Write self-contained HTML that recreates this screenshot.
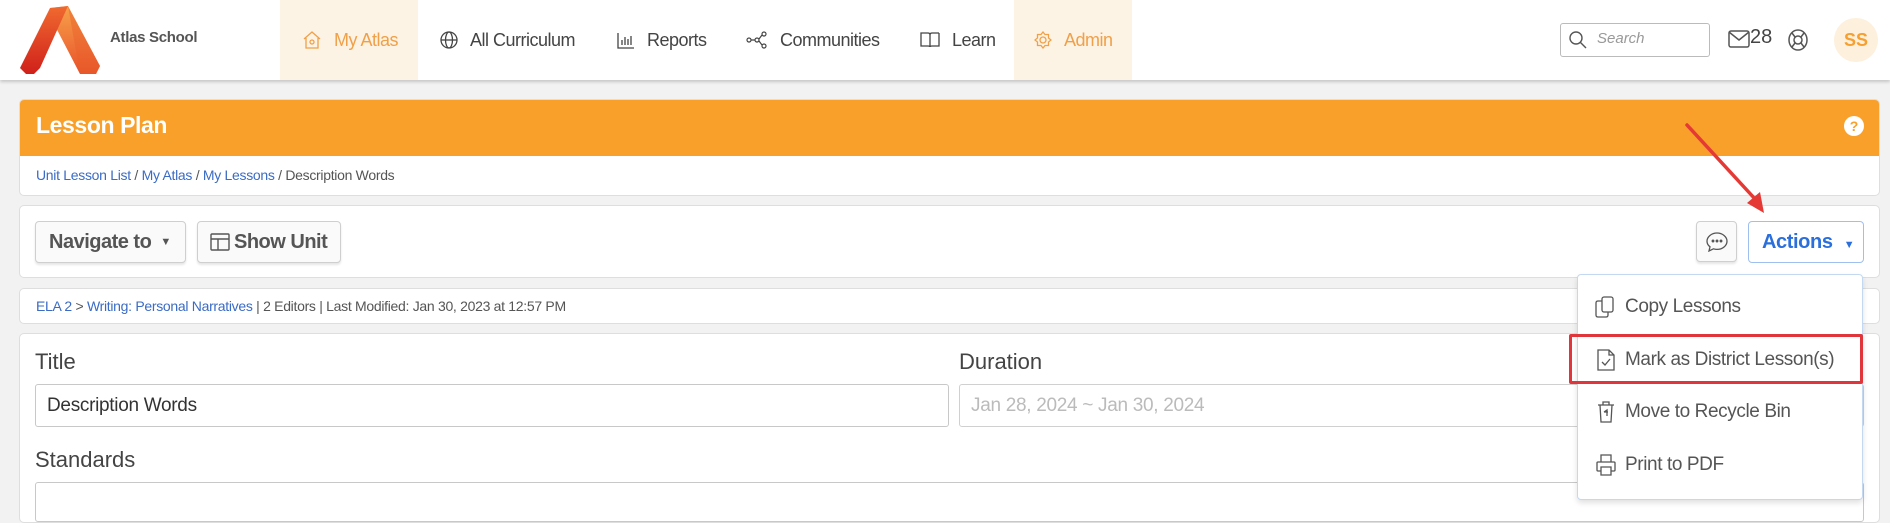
<!DOCTYPE html>
<html><head><meta charset="utf-8"><style>
*{box-sizing:border-box;margin:0;padding:0}
body{width:1890px;height:512px;overflow:hidden;background:#f2f2f2;font-family:"Liberation Sans",sans-serif;position:relative;color:#333}
.abs{position:absolute}
.hdr{left:0;top:0;width:1890px;height:80px;background:#fff;box-shadow:0 2px 3px rgba(0,0,0,.18)}
.nav{top:0;height:80px;display:flex;align-items:center;font-size:18px;color:#444;letter-spacing:-0.5px}
.nav svg{margin-right:12px}
.card{background:#fff;border:1px solid #dedede;border-radius:5px}
.btn{background:#fafafa;border:1px solid #cfcfcf;border-radius:4px;box-shadow:0 2px 2px rgba(0,0,0,.1);display:flex;align-items:center;font-size:20px;font-weight:bold;color:#555;letter-spacing:-0.5px}
a{color:#3b6bc4;text-decoration:none}
.item{left:1625px;font-size:19px;color:#555;letter-spacing:-0.4px}
</style></head><body>
<div class="abs hdr"></div>
<svg class="abs" style="left:20px;top:6px" width="80" height="68" viewBox="0 0 80 68">
<defs><linearGradient id="g1" x1="0" y1="0" x2="0" y2="1"><stop offset="0" stop-color="#f06a30"/><stop offset="1" stop-color="#d0201a"/></linearGradient>
<linearGradient id="g2" x1="0" y1="0" x2="0" y2="1"><stop offset="0" stop-color="#f7a24a"/><stop offset="1" stop-color="#e8502a"/></linearGradient></defs>
<polygon points="30,2 48,0 80,60 76,68 60,68 32,14" fill="url(#g2)"/>
<polygon points="30,2 48,0 20,62 14,68 6,68 0,62" fill="url(#g1)"/>
<polygon points="48,0 60,68 76,68 80,60" fill="#e8602a" opacity=".45"/>
</svg>
<div class="abs" style="left:110px;top:29px;font-size:15px;font-weight:bold;color:#555;letter-spacing:-0.3px">Atlas School</div>
<div class="abs" style="left:280px;top:0;width:138px;height:80px;background:#fdf3e4"></div>
<div class="abs" style="left:1014px;top:0;width:118px;height:80px;background:#fdf3e4"></div>
<div class="abs nav" style="left:302px;color:#f0a048"><svg width="20" height="20" viewBox="0 0 20 20" fill="none" stroke="#f0a048" stroke-width="1.3"><path d="M2 9 L10 2 L18 9 M4 8 V18 H16 V8"/><circle cx="10" cy="12" r="2"/></svg>My Atlas</div>
<div class="abs nav" style="left:440px"><svg width="18" height="18" viewBox="0 0 18 18" fill="none" stroke="#444" stroke-width="1.3"><circle cx="9" cy="9" r="8"/><ellipse cx="9" cy="9" rx="3.5" ry="8"/><path d="M1 9H17"/></svg>All Curriculum</div>
<div class="abs nav" style="left:617px"><svg width="18" height="18" viewBox="0 0 18 18" fill="none" stroke="#444" stroke-width="1.3"><path d="M1 2V17H17M5 14V9M8 14V6M11 14V8M14 14V5"/></svg>Reports</div>
<div class="abs nav" style="left:746px"><svg width="22" height="18" viewBox="0 0 22 18" fill="none" stroke="#444" stroke-width="1.2"><circle cx="3" cy="9" r="2"/><circle cx="11" cy="9" r="2"/><circle cx="18" cy="3" r="2"/><circle cx="18" cy="15" r="2"/><path d="M5 9H9M13 8L16 4M13 10L16 14"/></svg>Communities</div>
<div class="abs nav" style="left:920px"><svg width="20" height="18" viewBox="0 0 20 18" fill="none" stroke="#444" stroke-width="1.3"><path d="M1 2H8Q10 2 10 4V16Q10 15 8 15H1ZM19 2H12Q10 2 10 4M19 2V15H12Q10 15 10 16"/></svg>Learn</div>
<div class="abs nav" style="left:1034px;color:#f0a048"><svg width="18" height="18" viewBox="0 0 18 18" fill="none" stroke="#f0a048" stroke-width="1.3"><circle cx="9" cy="9" r="3"/><path d="M9 1L11 3.5L14.5 3.5L14.5 7L17 9L14.5 11L14.5 14.5L11 14.5L9 17L7 14.5L3.5 14.5L3.5 11L1 9L3.5 7L3.5 3.5L7 3.5Z"/></svg>Admin</div>
<div class="abs" style="left:1560px;top:23px;width:150px;height:34px;border:1px solid #bbb;border-radius:3px;background:#fff"></div>
<svg class="abs" style="left:1569px;top:31px" width="18" height="18" viewBox="0 0 18 18" fill="none" stroke="#555" stroke-width="1.4"><circle cx="7" cy="7" r="6"/><path d="M11.5 11.5L17 17"/></svg>
<div class="abs" style="left:1597px;top:30px;font-size:15px;font-style:italic;color:#999">Search</div>
<svg class="abs" style="left:1728px;top:30px" width="22" height="18" viewBox="0 0 22 18" fill="none" stroke="#555" stroke-width="1.5"><rect x="1" y="1" width="20" height="16" rx="2"/><path d="M1 2L11 10L21 2"/></svg>
<div class="abs" style="left:1750px;top:26px;font-size:20px;color:#444">28</div>
<svg class="abs" style="left:1788px;top:29px" width="20" height="22" viewBox="0 0 20 22" fill="none" stroke="#555" stroke-width="1.5"><ellipse cx="10" cy="11" rx="9" ry="10"/><circle cx="10" cy="11" r="4"/><path d="M4 4L7 8M16 4L13 8M4 18L7 14M16 18L13 14"/></svg>
<div class="abs" style="left:1834px;top:18px;width:44px;height:44px;border-radius:50%;background:#fdf0dc;color:#f5a030;font-weight:bold;font-size:18px;text-align:center;line-height:44px">SS</div>

<div class="abs card" style="left:19px;top:99px;width:1861px;height:97px;overflow:hidden">
<div style="height:56px;background:#f9a02a;color:#fff;font-weight:bold;font-size:23px;padding:12px 0 0 16px;letter-spacing:-0.4px">Lesson Plan</div>
<div style="padding:11px 0 0 16px;font-size:14px;color:#555;letter-spacing:-0.3px"><a>Unit Lesson List</a> / <a>My Atlas</a> / <a>My Lessons</a> / Description Words</div>
</div>
<div class="abs" style="left:1844px;top:116px;width:20px;height:20px;border-radius:50%;background:#fff;color:#f9a02a;font-weight:bold;font-size:14px;text-align:center;line-height:20px">?</div>

<div class="abs card" style="left:19px;top:205px;width:1861px;height:73px"></div>
<div class="abs btn" style="left:35px;top:221px;width:151px;height:42px;padding-left:13px">Navigate to<span style="font-size:11px;margin-left:9px">&#9660;</span></div>
<div class="abs btn" style="left:197px;top:221px;width:144px;height:42px;padding-left:12px"><svg width="20" height="20" viewBox="0 0 20 20" fill="none" stroke="#555" stroke-width="1.4" style="margin-right:4px"><rect x="1" y="2" width="18" height="16" rx="1"/><path d="M1 7H19M8 7V18"/></svg>Show Unit</div>
<div class="abs btn" style="left:1696px;top:221px;width:41px;height:41px;justify-content:center"><svg width="22" height="20" viewBox="0 0 22 20" fill="none" stroke="#555" stroke-width="1.3"><path d="M11 1C5.5 1 1 4.8 1 9.2C1 11.5 2.2 13.4 4 14.8L3 19L7.5 16.8C8.6 17.2 9.8 17.4 11 17.4C16.5 17.4 21 13.6 21 9.2C21 4.8 16.5 1 11 1Z"/><circle cx="7" cy="9" r=".8" fill="#555"/><circle cx="11" cy="9" r=".8" fill="#555"/><circle cx="15" cy="9" r=".8" fill="#555"/></svg></div>
<div class="abs" style="left:1748px;top:221px;width:116px;height:42px;border:1px solid #9fc0ee;border-radius:4px;background:#fff;color:#2a6fdb;font-weight:bold;font-size:20px;padding:9px 0 0 13px;letter-spacing:-0.4px">Actions <span style="font-size:11px;margin-left:6px">&#9660;</span></div>

<div class="abs card" style="left:19px;top:288px;width:1861px;height:36px;padding:9px 0 0 16px;font-size:14px;color:#555;letter-spacing:-0.3px"><a>ELA 2</a> &gt; <a>Writing: Personal Narratives</a> | 2 Editors | Last Modified: Jan 30, 2023 at 12:57 PM</div>

<div class="abs card" style="left:19px;top:333px;width:1861px;height:190px"></div>
<div class="abs" style="left:35px;top:349px;font-size:22px;color:#444">Title</div>
<div class="abs" style="left:959px;top:349px;font-size:22px;color:#444">Duration</div>
<div class="abs" style="left:35px;top:384px;width:914px;height:43px;border:1px solid #c8c8c8;border-radius:3px;font-size:19px;color:#333;padding:10px 0 0 11px;letter-spacing:-0.3px">Description Words</div>
<div class="abs" style="left:959px;top:384px;width:905px;height:43px;border:1px solid #d0d0d0;border-radius:3px;font-size:19px;color:#bbb;padding:10px 0 0 11px;letter-spacing:-0.3px">Jan 28, 2024 ~ Jan 30, 2024</div>
<div class="abs" style="left:35px;top:447px;font-size:22px;color:#444">Standards</div>
<div class="abs" style="left:35px;top:482px;width:1829px;height:40px;border:1px solid #c8c8c8;border-radius:3px"></div>

<div class="abs" style="left:1577px;top:274px;width:286px;height:226px;background:#fff;border:1px solid #c5d8f2;border-radius:4px;box-shadow:0 3px 6px rgba(0,0,0,.12)"></div>
<svg class="abs" style="left:1595px;top:296px" width="20" height="22" viewBox="0 0 20 22" fill="none" stroke="#555" stroke-width="1.3"><rect x="7" y="1" width="11" height="15" rx="2"/><path d="M7 5H3Q1 5 1 7V19Q1 21 3 21H11Q13 21 13 19V16"/></svg>
<div class="abs item" style="top:296px">Copy Lessons</div>
<svg class="abs" style="left:1597px;top:349px" width="18" height="22" viewBox="0 0 18 22" fill="none" stroke="#555" stroke-width="1.3"><path d="M1 1H12L17 6V21H1Z M12 1V6H17"/><path d="M5 13L8 16L13 10"/></svg>
<div class="abs item" style="top:349px">Mark as District Lesson(s)</div>
<svg class="abs" style="left:1597px;top:401px" width="18" height="22" viewBox="0 0 18 22" fill="none" stroke="#555" stroke-width="1.3"><path d="M1 4H17M6 4V1H12V4M3 4L4 21H14L15 4"/><path d="M7 11L10 9V15M7 11H11"/></svg>
<div class="abs item" style="top:401px">Move to Recycle Bin</div>
<svg class="abs" style="left:1596px;top:454px" width="20" height="22" viewBox="0 0 20 22" fill="none" stroke="#555" stroke-width="1.3"><path d="M5 8V1H15V8M5 17H2Q1 17 1 16V9Q1 8 2 8H18Q19 8 19 9V16Q19 17 18 17H15M5 13H15V21H5Z"/></svg>
<div class="abs item" style="top:454px">Print to PDF</div>
<div class="abs" style="left:1569px;top:334px;width:294px;height:50px;border:3px solid #e0353a;border-radius:2px"></div>

<svg class="abs" style="left:0;top:0" width="1890" height="512"><line x1="1687" y1="125" x2="1756" y2="200" stroke="#e53935" stroke-width="3.5" stroke-linecap="round"/><polygon points="1764,213 1747,203 1760,192" fill="#e53935"/></svg>
</body></html>
